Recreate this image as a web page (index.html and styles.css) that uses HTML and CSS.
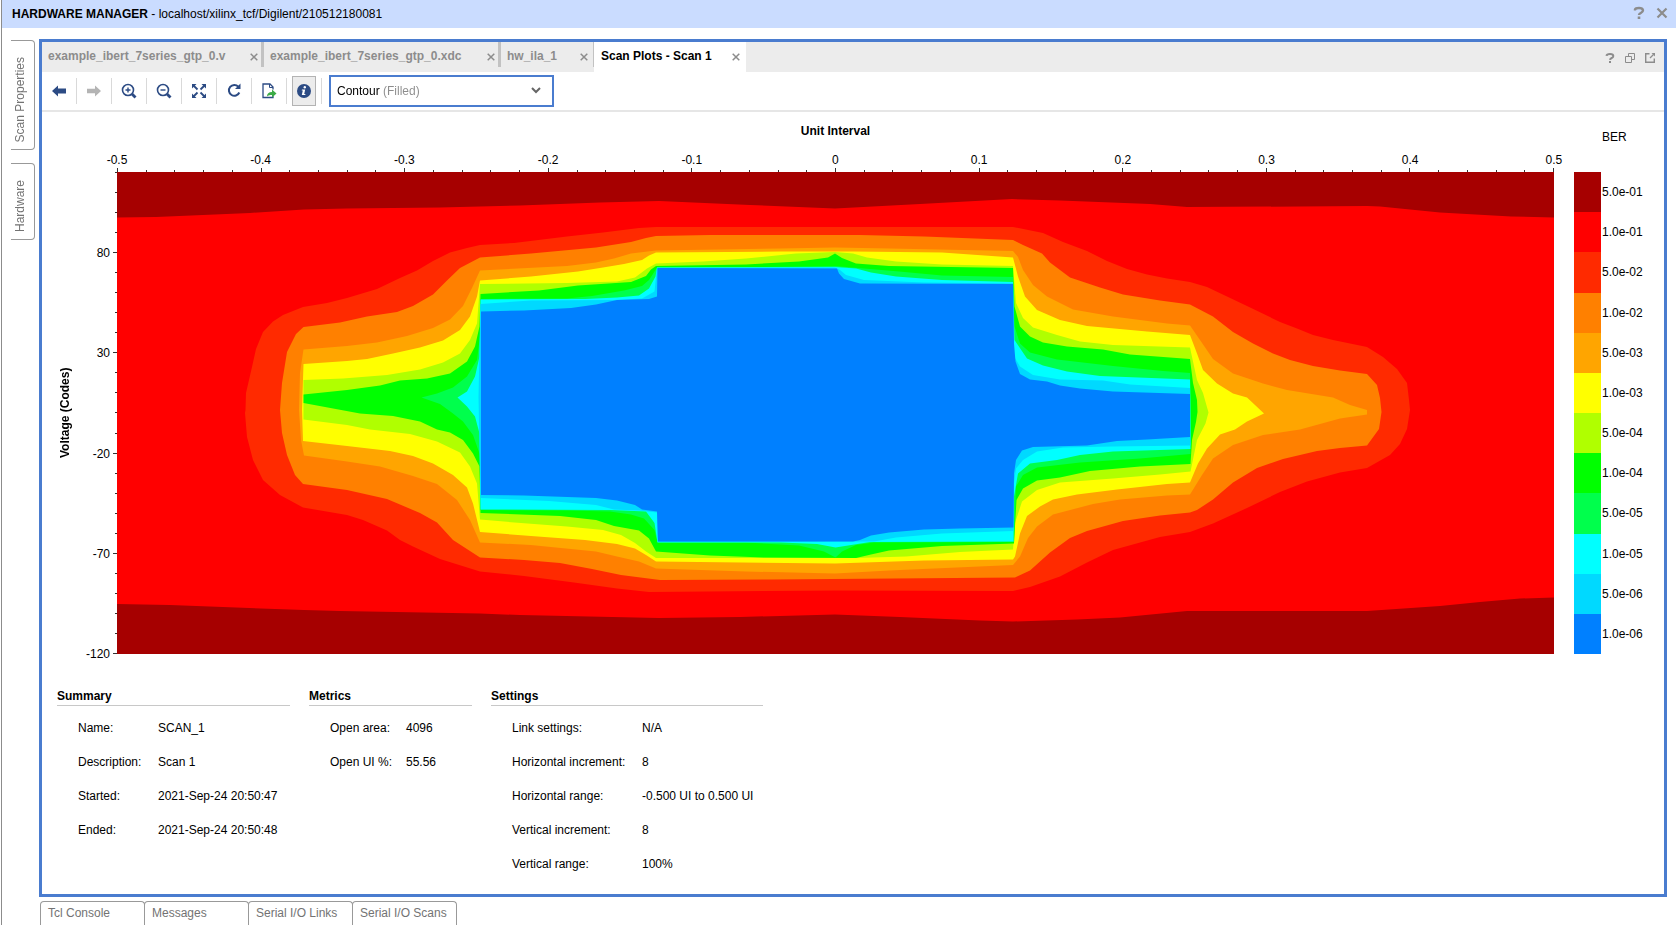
FILE: index.html
```html
<!DOCTYPE html>
<html lang="en">
<head>
<meta charset="utf-8">
<title>Hardware Manager</title>
<link rel="stylesheet" href="styles.css">
</head>
<body>
<div class="window">
  <header class="titlebar">
    <h1 class="titlebar-text"><b>HARDWARE MANAGER</b> - localhost/xilinx_tcf/Digilent/210512180081</h1>
    <button class="icon-btn" aria-label="Help"><svg width="12" height="14" viewBox="0 0 12 14"><path d="M2 4.500V3.500Q2.500 2 6 2t4 2.300q0 1.700-2 2.500T6 9" fill="none" stroke="#8c8c8c" stroke-width="2.400"/><rect x="4.700" y="10.500" width="2.600" height="2.500" fill="#8c8c8c"/></svg></button>
    <button class="icon-btn" aria-label="Close"><svg width="12" height="12" viewBox="0 0 12 12"><path d="M1.500 1.500l9 9m0-9l-9 9" stroke="#8c8c8c" stroke-width="2.200"/></svg></button>
  </header>

  <div class="workspace">
    <nav class="rail">
      <button class="rail-tab"><span class="rail-text">Scan Properties</span></button>
      <button class="rail-tab"><span class="rail-text">Hardware</span></button>
    </nav>

    <main class="panel">
      <div class="tabs">
        <div class="tab tab-v"><button class="tab-name">example_ibert_7series_gtp_0.v</button><button class="tab-close" aria-label="Close tab"><svg width="8" height="8" viewBox="0 0 8 8"><path d="M.7.700l6.600 6.600m0-6.600L.7 7.300"/></svg></button></div>
        <div class="tab tab-xdc"><button class="tab-name">example_ibert_7series_gtp_0.xdc</button><button class="tab-close" aria-label="Close tab"><svg width="8" height="8" viewBox="0 0 8 8"><path d="M.7.700l6.600 6.600m0-6.600L.7 7.300"/></svg></button></div>
        <div class="tab tab-ila"><button class="tab-name">hw_ila_1</button><button class="tab-close" aria-label="Close tab"><svg width="8" height="8" viewBox="0 0 8 8"><path d="M.7.700l6.600 6.600m0-6.600L.7 7.300"/></svg></button></div>
        <div class="tab tab-active"><button class="tab-name">Scan Plots - Scan 1</button><button class="tab-close" aria-label="Close tab"><svg width="8" height="8" viewBox="0 0 8 8"><path d="M.7.700l6.600 6.600m0-6.600L.7 7.300"/></svg></button></div>
        <div class="tab-tools">
          <button class="icon-btn" aria-label="Help"><svg width="10" height="12" viewBox="0 0 10 12"><path d="M1.500 3.800Q1.700 2 5 2t3.300 1.900Q8.300 5.300 6.700 6T5 7.800" fill="none" stroke="#8c8c8c" stroke-width="2"/><rect x="4" y="9" width="2" height="2" fill="#8c8c8c"/></svg></button>
          <button class="icon-btn" aria-label="Restore"><svg width="10" height="10" viewBox="0 0 10 10"><path d="M3.500 3.500v-3h6v6h-3M.5 3.500h6v6h-6z" fill="none" stroke="#8c8c8c"/></svg></button>
          <button class="icon-btn" aria-label="Float"><svg width="10" height="10" viewBox="0 0 10 10"><path d="M4.500 .7H.7v8.600h8.600V5.500" fill="none" stroke="#8c8c8c" stroke-width="1.400"/><path d="M6.500 0H10v3.500z" fill="#8c8c8c"/><path d="M8.500 1.500L5 5" stroke="#8c8c8c" stroke-width="1.300"/></svg></button>
        </div>
      </div>

      <div class="toolbar">
        <button class="tool" aria-label="Back"><svg width="14" height="12" viewBox="0 0 14 12"><path d="M0 6l6-5.500v3h8v5H6v3z" fill="#2c4b84"/></svg></button>
        <button class="tool" aria-label="Forward"><svg width="14" height="12" viewBox="0 0 14 12"><path d="M14 6L8 .5v3.300H0v4.400h8v3.300z" fill="#b4b4b4"/></svg></button>
        <button class="tool" aria-label="Zoom in"><svg width="16" height="16" viewBox="0 0 16 16" fill="none" stroke="#2c4b84"><circle cx="7" cy="7" r="5.500" stroke-width="1.600"/><path d="M11 11l3.500 3.500" stroke-width="2.800"/><path d="M4.500 7h5M7 4.500v5" stroke-width="1.400"/></svg></button>
        <button class="tool" aria-label="Zoom out"><svg width="16" height="16" viewBox="0 0 16 16" fill="none" stroke="#2c4b84"><circle cx="7" cy="7" r="5.500" stroke-width="1.600"/><path d="M11 11l3.500 3.500" stroke-width="2.800"/><path d="M4.500 7h5" stroke-width="1.400"/></svg></button>
        <button class="tool" aria-label="Zoom fit"><svg width="14" height="14" viewBox="0 0 14 14"><path d="M0 0h4.500L0 4.500zM14 0v4.500L9.500 0zM0 14V9.500L4.500 14zM14 14H9.500L14 9.500z" fill="#2c4b84"/><path d="M1.500 1.500L5.500 5.500M12.500 1.500L8.500 5.500M1.500 12.500L5.500 8.500M12.500 12.500L8.500 8.500" stroke="#2c4b84" stroke-width="1.800"/></svg></button>
        <button class="tool" aria-label="Refresh"><svg width="15" height="15" viewBox="0 0 15 15"><path d="M11.300 3.700A5.400 5.400 0 1 0 12.300 9.500" fill="none" stroke="#2c4b84" stroke-width="2"/><path d="M13.500 .5v5.500H8z" fill="#2c4b84"/></svg></button>
        <button class="tool" aria-label="Export"><svg width="15" height="16" viewBox="0 0 15 16"><path d="M11 6.500V4L8 1H1v13.500h10V13" fill="none" stroke="#2c4b84" stroke-width="1.300"/><path d="M7.500 1v3.500H11" fill="none" stroke="#2c4b84"/><path d="M5 13.500Q5 9 10 9V6.500l4.500 4-4.500 4V12Q6.500 11.500 5 13.500z" fill="#3cab46"/></svg></button>
        <button class="tool" aria-label="Information" aria-pressed="true"><span class="tool-pressed"><svg width="14" height="14" viewBox="0 0 14 14"><circle cx="7" cy="7" r="7" fill="#2c4b84"/><circle cx="7.800" cy="3.200" r="1.200" fill="#fff"/><path d="M5 5.500h3.200L7.200 10h1.300l-.3 1H4.800l1-4.500H4.700z" fill="#fff"/></svg></span></button>
        <label class="picker">
          <select class="picker-select" aria-label="Plot type"><option>Contour (Filled)</option></select>
          <svg class="picker-arrow" width="10" height="7" viewBox="0 0 10 7"><path d="M1 1l4 4 4-4" fill="none" stroke="#666" stroke-width="2"/></svg>
        </label>
      </div>

      <section class="chart">
        <div class="y-axis">
          <div class="y-title">Voltage (Codes)</div>
          <div class="y-labels"><span>80</span><span>30</span><span>-20</span><span>-70</span><span>-120</span></div>
          <svg class="y-ticks" viewBox="0 0 4 482" preserveAspectRatio="none"><path d="M3 0V482" stroke-width="2" stroke-dasharray="1 19.040"/><path d="M2 80.300V482" stroke-width="4" stroke-dasharray="1 99.150"/></svg>
        </div>
        <div class="plot">
          <div class="x-title">Unit Interval</div>
          <div class="x-labels"><span>-0.5</span><span>-0.4</span><span>-0.3</span><span>-0.2</span><span>-0.1</span><span>0</span><span>0.1</span><span>0.2</span><span>0.3</span><span>0.4</span><span>0.5</span></div>
          <svg class="x-ticks" viewBox="0 0 1437 4" preserveAspectRatio="none"><path d="M0 3H1437" stroke-width="2" stroke-dasharray="1 27.720"/><path d="M0 2H1437" stroke-width="4" stroke-dasharray="1 142.600"/></svg>
          <svg class="contour" viewBox="117 172 1437 482" preserveAspectRatio="none" role="img" aria-label="Eye scan contour plot">
            <rect x="117" y="172" width="1437" height="482" fill="#a60000"/>
            <polygon fill="#f00" points="117,217.500 156,217 250,213 304,209.500 347,208.500 440,207.500 520,205.500 600,202.500 659,201 750,205 835,208.500 920,204 1012,199 1060,200.500 1150,204 1187,207 1300,206.500 1367,206 1380,206.500 1440,212.500 1511,216.500 1554,217.500 1554,597.500 1520,598.500 1480,602 1440,606 1367,611 1187,611 1120,617.500 1077,619.500 1013,621.500 980,620.500 900,617 835,614.500 740,617 659,618 520,615 480,613.500 340,611 304,610 170,605 117,604"/>
            <polygon fill="#ff2a00" points="245.500,410 246,393 252,367 256,349 263,332 273,321.500 283,315 293,311 303,307 327,303 347,298 377,289 400,278 417,270.500 433,261 450,252.500 467,248 480,245 514,243 567,236.500 603,232.500 639,228 656,227 1013,227 1043,233 1063,242 1087,251 1107,261 1127,269 1147,274.500 1167,278.500 1190,282 1207,287 1247,306 1280,322 1297,328.500 1313,335 1333,340 1367,347 1383,357 1397,369 1407,383 1409,400 1410,410 1407,429 1400,444 1390,455 1367,468 1340,472.500 1307,481.500 1280,492 1247,508 1213,523.500 1190,532 1160,537 1113,550 1087,562.500 1060,576.500 1030,587 1013,591 835,590.500 649,592 617,588.500 574,582.500 524,576 480,571.500 440,559 413,546.500 400,540 387,530.500 363,520 347,515 303,507.500 280,495 263,480 253,460 247,437 245,413"/>
            <polygon fill="#ff8000" points="280,410 282,383 287,352 296,334 303.500,327 340,322.500 367,316.500 397,312 413,306 433,294.500 447,280.500 460,268 480,257.500 531,253.500 596,247.500 631,242 646,238 656,236 710,235 860,235 924,236.500 1013,240 1023,245 1042,253.500 1050,262.500 1070,277.500 1100,287.500 1123,294.500 1160,300.500 1190,304.500 1213,316.500 1233,332 1253,343.500 1273,353.500 1290,360 1313,366 1340,370.500 1367,374 1377,385 1380,398 1381.500,412 1379,429 1367,445.500 1340,448 1317,451 1283,459 1257,468 1233,482.500 1213,499.500 1197,510 1190,512.500 1160,515.500 1123,521 1087,531 1070,538 1050,552.500 1030,570.500 1015,577.500 771,579.500 660,580 621,575 592,569 560,563 524,560 480,557.500 453,540 437,522.500 420,513 387,499 347,490 303,484 295,475 287,455 282,433"/>
            <polygon fill="#ffa500" points="299,410 300,373 303.500,349.500 347,346 377,342.500 407,336 433,328 450,319.500 463,306 472,288 480,270.500 567,266 596,262.500 614,258.500 631,253.500 656,250.500 781,248.500 835,247.500 889,248.500 1013,251 1018,257 1023,270 1033,285 1047,296.500 1073,309.500 1113,316.500 1167,323.500 1190,325.500 1200,340 1213,359 1233,373.500 1263,383.500 1287,390 1333,397.500 1350,405 1367,410 1367,414.500 1340,418.500 1300,429.500 1263,435 1233,445 1213,458.500 1202,475 1190,494.500 1167,495.500 1120,499.500 1093,504 1053,514.500 1037,526.500 1028,538 1020,556.500 1013,565 889,570.500 835,573.500 746,571.500 656,568.500 639,561.500 617,556.500 596,551.500 531,545 480,542.500 470,520 457,500 437,484 413,476 380,466.500 347,461.500 304,455.500 301,440"/>
            <polygon fill="#ff0" points="302,410 303.500,364 347,361 367,359 393,353.500 420,347.500 443,340.500 460,330 470,316.500 477,296.500 480,280.500 531,276.500 578,271.500 603,267.500 624,264 642,260 649,255.500 656,252.500 781,251.500 853,251.500 942,252.500 1013,257.500 1018,276.500 1025,296.500 1037,310 1060,320 1087,326 1147,331.500 1190,335 1197,353.500 1203,370 1217,383.500 1233,393.500 1247,397.500 1255,405 1264,413.500 1247,421.500 1235,429.500 1220,434.500 1207,448.500 1198,463.500 1190,482.500 1167,484 1117,489.500 1077,494.500 1053,499.500 1040,506.500 1027,516 1020,533.500 1015,556.500 1013,559.500 924,560.500 835,563.500 656,561.500 646,555 635,548.500 617,544 585,540 531,536 480,532 473,503.500 467,487.500 453,475 433,463.500 413,456 390,451 347,446 303,441"/>
            <polygon fill="#b0ff00" points="303.500,380 343,378.500 387,375 420,369.500 443,362.500 460,353.500 470,340 477,323.500 480,284 567,283 617,281.500 635,277.500 647,268.500 656,263.500 703,261.500 746,258.500 796,253.500 835,252 853,253.500 867,257.500 896,261.500 942,264.500 1013,266 1016,303 1023,318 1033,327.500 1057,335 1080,341.500 1113,345 1190,347.500 1197,380 1203,393 1208.500,412.500 1205.500,423.500 1197,440 1190.500,471.500 1160,474.500 1113,478.500 1060,482.500 1037,490 1022,501.500 1015,523 1013,549.500 960,552 906,556.500 856,558 656,558 646,551.500 635,543 621,535 603,530 567,526.500 521,523 480,519.500 477,483.500 470,466.500 460,452.500 437,441.500 410,434 370,429.500 347,425 303.500,419.500"/>
            <polygon fill="#0f0" points="303.500,394.500 347,390 380,385.500 400,380.500 427,378.500 450,373.500 467,361.500 475,346.500 479.500,326.500 480.500,294 539,290.500 578,285.500 631,282 646,276 651,269.500 656,266 746,264.500 799,261.500 828,257.500 835,253.500 842,258 856,263.500 889,266 1013,268 1014.500,306.500 1020,326.500 1030,336.500 1043,342.500 1067,346.500 1103,349.500 1130,354.500 1190,359 1193,383 1197,400 1197.500,412 1196,422 1192,440 1190.500,464 1140,466.500 1090,471 1060,477.500 1037,480.500 1023,488.500 1016.500,500 1014,543.500 942,546 889,550.500 871,554.500 856,558 764,557.500 710,555.500 656,551.500 649,538.500 639,530.500 614,526 596,520 560,516 480.500,513 479.500,466.500 473,453.500 463,440 450,432.500 437,429.500 420,421.500 393,416 360,413.500 303.500,403"/>
            <polygon fill="#00ff4c" points="421.500,397.500 437,393.500 453,387.500 467,376.500 477,360 480,336.500 480.500,299 567,298.500 592,296 624,290.500 642,286 649,280 655.500,270 657,267 764,267 835,266 864,268.500 899,271.500 942,275.500 1013,277 1014.500,326.500 1020,343.500 1030,352.500 1057,359.500 1113,366 1163,371 1190,373 1191,400 1190.500,454 1140,458.500 1080,462.500 1037,467.500 1023,475 1016,486.500 1014,542 874,542.500 856,545 842,551.500 835.500,557.500 824,551.500 799,545.500 746,542.500 657.500,542.500 654.500,530 644,518.500 631,514.500 610,511.500 567,510.500 480.500,510 479.500,453.500 473,435 463,421.500 453,413.500 440,404"/>
            <polygon fill="#0ff" points="457.500,397.500 467,391.500 475,376.500 479.500,356.500 480.500,299.500 585,299 617,297.500 639,295.500 649,288.500 655.500,276.500 657,267.500 835,267 856,268.500 871,272.500 896,276.500 942,280 1013,282 1014.500,340 1027,358.500 1043,365.500 1067,371.500 1100,376 1190,379.500 1190.500,449 1113,451.500 1080,455 1057,460 1030,463.500 1018,473.500 1014,496.500 1013.500,541.500 870,542 835.500,547.500 817,544 781,542.500 657.500,542.500 654.500,523 646,511.500 610,510 480.500,509.500 479.500,433.500 475,416.500 467,406.500"/>
            <polygon fill="#00d9ff" points="480.500,304 531,300.500 614,300 642,298.500 654.500,291.500 657,268 835,267.500 840,270 846,275 864,280 924,282.500 1013,283.500 1014,356.500 1020,366.500 1033,375 1060,379.500 1103,380.500 1130,384.500 1190,388 1190.500,445.500 1113,446.500 1063,447.500 1037,451.500 1023,460 1016,468.500 1014,483.500 1013.500,531 942,533.500 896,537.500 874,541.500 657.500,542 657,512.500 639,510.500 614,509.500 596,505 549,501 480.500,498 478.500,397"/>
            <polygon fill="#0080ff" points="481,311.500 524,310.500 571,308 596,304.500 617,300 649,299 657,296.500 657.500,268 837,268.500 839,273.500 844,279 860,283.500 1013,284 1014,343.500 1015.500,361.500 1020,374 1030,379.500 1047,381.500 1060,385.500 1080,388.500 1113,391.500 1190,394 1190,437 1147,439.500 1117,441 1087,445.500 1033,447 1022,450.500 1016,460 1014,473.500 1013.500,527.500 960,528.500 924,529.500 889,532.500 871,535.500 860,540 853,541.500 658,541.500 657,511.500 642,509.500 635,505 617,500.500 596,498 524,495.500 481,495"/>
          </svg>
        </div>
        <div class="legend">
          <div class="legend-title">BER</div>
          <ul class="legend-list">
            <li class="key key-1">5.0e-01</li>
            <li class="key key-2">1.0e-01</li>
            <li class="key key-3">5.0e-02</li>
            <li class="key key-4">1.0e-02</li>
            <li class="key key-5">5.0e-03</li>
            <li class="key key-6">1.0e-03</li>
            <li class="key key-7">5.0e-04</li>
            <li class="key key-8">1.0e-04</li>
            <li class="key key-9">5.0e-05</li>
            <li class="key key-10">1.0e-05</li>
            <li class="key key-11">5.0e-06</li>
            <li class="key key-12">1.0e-06</li>
          </ul>
        </div>
      </section>

      <div class="details">
        <section class="group group-summary">
          <h2 class="group-title">Summary</h2>
          <dl class="props">
            <dt>Name:</dt><dd>SCAN_1</dd>
            <dt>Description:</dt><dd>Scan 1</dd>
            <dt>Started:</dt><dd>2021-Sep-24 20:50:47</dd>
            <dt>Ended:</dt><dd>2021-Sep-24 20:50:48</dd>
          </dl>
        </section>
        <section class="group group-metrics">
          <h2 class="group-title">Metrics</h2>
          <dl class="props">
            <dt>Open area:</dt><dd>4096</dd>
            <dt>Open UI %:</dt><dd>55.56</dd>
          </dl>
        </section>
        <section class="group group-settings">
          <h2 class="group-title">Settings</h2>
          <dl class="props">
            <dt>Link settings:</dt><dd>N/A</dd>
            <dt>Horizontal increment:</dt><dd>8</dd>
            <dt>Horizontal range:</dt><dd>-0.500 UI to 0.500 UI</dd>
            <dt>Vertical increment:</dt><dd>8</dd>
            <dt>Vertical range:</dt><dd>100%</dd>
          </dl>
        </section>
      </div>
    </main>
  </div>

  <nav class="dock">
    <button class="dock-tab">Tcl Console</button>
    <button class="dock-tab">Messages</button>
    <button class="dock-tab">Serial I/O Links</button>
    <button class="dock-tab">Serial I/O Scans</button>
  </nav>
</div>
</body>
</html>
```
FILE: styles.css
```css
* { box-sizing: border-box; }

body {
  margin: 0;
  background: #fff;
  color: #000;
  font: 12px/16px "Liberation Sans", Arial, sans-serif;
}

button {
  margin: 0;
  padding: 0;
  border: 0;
  background: none;
  color: inherit;
  font: inherit;
}

svg { display: block; }

.window {
  display: flex;
  flex-direction: column;
  min-height: 100vh;
  margin-left: 1px;
  border-left: 1px solid #8c8c8c;
}

.titlebar {
  display: flex;
  align-items: center;
  gap: 11px;
  height: 28px;
  padding: 0 8px 0 10px;
  background: #cadcff;
}

.titlebar-text {
  flex: 1;
  margin: 0;
  font-size: 12px;
  font-weight: normal;
}

.icon-btn {
  display: flex;
  align-items: center;
  justify-content: center;
}

.titlebar .icon-btn {
  padding-bottom: 2px;
}

.workspace {
  flex: 1;
  display: flex;
  padding: 11px 9px 0 9px;
}

.rail {
  display: flex;
  flex-direction: column;
  gap: 13px;
  width: 28px;
  padding-top: 1px;
}

.rail-tab {
  display: flex;
  justify-content: center;
  width: 24px;
  padding: 16px 5px 7px 0;
  border: 1px solid #999;
  border-left: 0;
  border-radius: 0 4px 4px 0;
  color: #737373;
}

.rail-text {
  writing-mode: vertical-rl;
  transform: rotate(180deg);
}

.panel {
  flex: 1;
  display: flex;
  flex-direction: column;
  min-width: 0;
  border: 3px solid #4a7ccf;
}

.tabs {
  display: flex;
  height: 30px;
  background: #ececec;
}

.tab {
  display: flex;
  align-items: center;
  justify-content: space-between;
  height: 25px;
  padding: 3px 3px 0 6px;
  border-right: 3px solid #c2c2c2;
  color: #8c8c8c;
  font-weight: bold;
}

.tab-v { min-width: 222px; }
.tab-xdc { min-width: 237px; }

.tab-ila {
  min-width: 93px;
  padding-right: 5px;
  border-right-width: 1px;
}

.tab-active {
  min-width: 152px;
  height: 30px;
  padding: 0 6px 2px 7px;
  border: 0;
  background: #fff;
  color: #000;
}

.tab-close {
  padding-top: 2px;
}

.tab-close path {
  fill: none;
  stroke: #8c8c8c;
  stroke-width: 1.5;
}

.tab-tools {
  display: flex;
  align-items: center;
  gap: 10px;
  margin-left: auto;
  padding: 2px 9px 0 0;
}

.toolbar {
  display: flex;
  align-items: center;
  height: 40px;
  padding-bottom: 1px;
  border-bottom: 2px solid #e6e6e6;
}

.tool {
  display: flex;
  align-items: center;
  justify-content: center;
  width: 35px;
  height: 26px;
  border-right: 1px solid #d9d9d9;
}

.tool-pressed {
  display: flex;
  flex: none;
  align-items: center;
  justify-content: center;
  width: 24px;
  height: 30px;
  border: 1px solid #b3b3b3;
  background: #ececec;
}

.picker {
  display: grid;
  align-items: center;
  width: 225px;
  height: 32px;
  margin-left: 7px;
  border: 2px solid #4a7ccf;
}

.picker-select,
.picker-arrow {
  grid-area: 1 / 1;
}

.picker-select {
  appearance: none;
  height: 20px;
  margin: 0;
  padding: 0 6px;
  border: 0;
  background: linear-gradient(90deg, #000 51px, #8c8c8c 51px);
  background-clip: text;
  color: transparent;
  font: inherit;
}

.picker-arrow {
  justify-self: end;
  margin-right: 11px;
  pointer-events: none;
}

.chart {
  flex: 1;
  display: flex;
  min-height: 320px;
}

.y-axis {
  display: flex;
  width: 75px;
  padding-top: 60px;
}

.y-title {
  width: 16px;
  margin-left: 15px;
  font-weight: bold;
  text-align: center;
  writing-mode: vertical-rl;
  transform: rotate(180deg);
}

.y-labels {
  flex: 1;
  display: flex;
  flex-direction: column;
  justify-content: space-between;
  padding: 81px 3px 0 0;
  text-align: right;
}

.y-labels span {
  height: 0;
  line-height: 0;
}

.y-ticks {
  width: 4px;
  height: 100%;
}

.y-ticks path,
.x-ticks path {
  stroke: #333;
  shape-rendering: crispEdges;
}

.plot {
  flex: 1;
  display: flex;
  flex-direction: column;
  min-width: 0;
  padding-top: 9px;
}

.x-title {
  line-height: 20px;
  font-weight: bold;
  text-align: center;
}

.x-labels {
  display: flex;
  justify-content: space-between;
  padding-top: 11px;
}

.x-labels span {
  display: flex;
  justify-content: center;
  width: 0;
}

.x-ticks {
  width: 100%;
  height: 4px;
}

.contour {
  flex: 1;
  width: 100%;
  height: 0;
  min-height: 0;
}

.legend {
  display: flex;
  flex-direction: column;
  width: 110px;
  padding: 17px 0 0 20px;
}

.legend-title {
  padding: 0 0 27px 28px;
}

.legend-list {
  flex: 1;
  display: flex;
  flex-direction: column;
  margin: 0;
  padding: 0;
  list-style: none;
}

.key {
  flex: 1;
  display: flex;
  align-items: center;
  padding-left: 1px;
  border-left: 27px solid;
}

.key-1 { border-color: #a60000; }
.key-2 { border-color: #f00; }
.key-3 { border-color: #ff2a00; }
.key-4 { border-color: #ff8000; }
.key-5 { border-color: #ffa500; }
.key-6 { border-color: #ff0; }
.key-7 { border-color: #b0ff00; }
.key-8 { border-color: #0f0; }
.key-9 { border-color: #00ff4c; }
.key-10 { border-color: #0ff; }
.key-11 { border-color: #00d9ff; }
.key-12 { border-color: #0080ff; }

.details {
  display: flex;
  gap: 19px;
  padding: 34px 15px 13px;
}

.group-title {
  margin: 0 0 5px;
  border-bottom: 1px solid #c8c8c8;
  font-size: 12px;
  line-height: 17px;
}

.props {
  display: grid;
  column-gap: 14px;
  margin: 0;
  padding: 0 9px 0 21px;
  line-height: 34px;
  white-space: nowrap;
}

.props dd { margin: 0; }

.group-summary { min-width: 233px; }
.group-summary .props { grid-template-columns: 66px auto; }
.group-metrics { min-width: 163px; }
.group-metrics .props { grid-template-columns: 62px auto; }
.group-settings { min-width: 272px; }
.group-settings .props { grid-template-columns: 116px auto; }

.dock {
  display: flex;
  padding: 4px 38px 0;
}

.dock-tab {
  width: 105px;
  height: 24px;
  margin-right: -1px;
  padding: 0 7px 2px;
  border: 1px solid #999;
  border-bottom: 0;
  border-radius: 4px 4px 0 0;
  color: #737373;
  text-align: left;
}
```
